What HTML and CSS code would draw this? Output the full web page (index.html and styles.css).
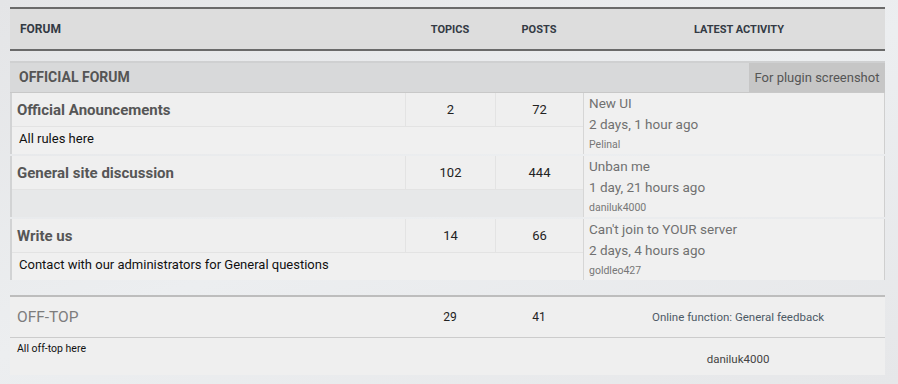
FILE: index.html
```html
<!DOCTYPE html>
<html lang="en">
<head>
    <meta charset="UTF-8">
    <meta name="viewport" content="width=device-width, initial-scale=1.0">
    <title>Forum</title>
    <link rel="stylesheet" href="styles.css">
</head>
<body>
    <div class="forum">
        <div class="head">
            <div class="h-forum">FORUM</div>
            <div class="h-num">TOPICS</div>
            <div class="h-num">POSTS</div>
            <div class="h-num h-latest">LATEST ACTIVITY</div>
        </div>

        <div class="section">
            <div class="category">
                <span class="cat-name">OFFICIAL FORUM</span>
                <span class="cat-note">For plugin screenshot</span>
            </div>

            <div class="row">
                <div class="title">Official Anouncements</div>
                <div class="num">2</div>
                <div class="num">72</div>
                <div class="latest">
                    <div class="topic">New UI</div>
                    <div class="time">2 days, 1 hour ago</div>
                    <div class="user">Pelinal</div>
                </div>
                <div class="desc">All rules here</div>
            </div>

            <div class="row">
                <div class="title">General site discussion</div>
                <div class="num">102</div>
                <div class="num">444</div>
                <div class="latest">
                    <div class="topic">Unban me</div>
                    <div class="time">1 day, 21 hours ago</div>
                    <div class="user">daniluk4000</div>
                </div>
                <div class="desc empty"></div>
            </div>

            <div class="row">
                <div class="title">Write us</div>
                <div class="num">14</div>
                <div class="num">66</div>
                <div class="latest">
                    <div class="topic">Can't join to YOUR server</div>
                    <div class="time">2 days, 4 hours ago</div>
                    <div class="user">goldleo427</div>
                </div>
                <div class="desc">Contact with our administrators for General questions</div>
            </div>
        </div>

        <div class="offtop">
            <div class="off-row">
                <div class="off-name">OFF-TOP</div>
                <div class="off-num">29</div>
                <div class="off-num">41</div>
                <div class="off-latest">Online function: General feedback</div>
            </div>
            <div class="off-row bottom">
                <div class="off-desc">All off-top here</div>
                <div></div>
                <div></div>
                <div class="off-user">daniluk4000</div>
            </div>
        </div>
    </div>
</body>
</html>
```

FILE: styles.css
```css
body {
    margin: 0;
    padding: 7px 13px 0 10px;
    font-family: Roboto, "Open Sans", sans-serif;
    background: linear-gradient(160deg, #e4e5e7 0%, #eceef0 50%, #e6e7e9 100%);
    height: 377px;
    overflow: hidden;
}

.forum {
    width: 875px;
}

.head {
    display: grid;
    grid-template-columns: 395px 90px 88px 302px;
    align-items: center;
    height: 40px;
    background: #dddddd;
    border-top: 2px solid #6a6a6a;
    border-bottom: 2px solid #6a6a6a;
    font-size: 11px;
    font-weight: bold;
    color: #333a44;
}

.h-forum {
    padding-left: 10px;
    font-size: 12px;
}

.h-num {
    text-align: center;
}

.h-latest {
    padding-left: 10px;
}

.section {
    margin-top: 10px;
}

.category {
    display: flex;
    justify-content: space-between;
    height: 29px;
    background: #d8d9da;
    border-top: 2px solid #cfd0d1;
    border-bottom: 1px solid #c8c8c8;
}

.cat-name {
    padding-left: 9px;
    line-height: 29px;
    font-size: 14px;
    font-weight: bold;
    color: #555;
}

.cat-note {
    width: 136px;
    text-align: center;
    line-height: 29px;
    background: #c6c6c6;
    font-size: 13px;
    color: #555;
}

.row {
    display: grid;
    grid-template-columns: 393px 90px 88px 302px;
    grid-template-rows: 34px 27px;
    border-left: 2px solid #d2d3d4;
    margin-bottom: 2px;
}

.title {
    background: #efefef;
    border-bottom: 1px solid #e3e3e3;
    padding-left: 5px;
    line-height: 35px;
    font-size: 15px;
    font-weight: bold;
    color: #565656;
}

.num {
    background: #efefef;
    border-left: 1px solid #e3e3e3;
    border-bottom: 1px solid #e3e3e3;
    text-align: center;
    line-height: 34px;
    font-size: 13px;
    color: #222;
}

.latest {
    grid-row: 1 / 3;
    grid-column: 4;
    background: #f0f0f0;
    border-left: 1px solid #d6d6d6;
    border-right: 1px solid #cfcfcf;
    padding: 0 0 0 5px;
    color: #707070;
}

.topic,
.time {
    font-size: 13.5px;
    line-height: 21px;
}

.user {
    font-size: 10.5px;
    line-height: 19px;
    color: #777;
}

.desc {
    grid-column: 1 / 4;
    background: #f0f0f0;
    padding-left: 7px;
    line-height: 24px;
    font-size: 13px;
    color: #111;
}

.desc.empty {
    background: #e7e8e9;
}

.offtop {
    margin-top: 15px;
    border-top: 2px solid #bdbdbd;
}

.off-row {
    display: grid;
    grid-template-columns: 395px 90px 88px 302px;
    height: 40px;
    background: #efefef;
    border-bottom: 1px solid #cccccc;
    align-items: center;
}

.off-row.bottom {
    height: 37px;
    align-items: start;
    border-bottom: none;
}

.off-name {
    padding-left: 7px;
    font-size: 15.5px;
    color: #7d7d7d;
}

.off-num {
    text-align: center;
    font-size: 12px;
    color: #222;
}

.off-latest {
    padding-left: 8px;
    text-align: center;
    font-size: 11.5px;
    color: #4d5a66;
}

.off-desc {
    padding: 4px 0 0 7px;
    font-size: 10.5px;
    color: #111;
}

.off-user {
    padding: 14px 0 0 8px;
    text-align: center;
    font-size: 11.5px;
    color: #444;
}
```
